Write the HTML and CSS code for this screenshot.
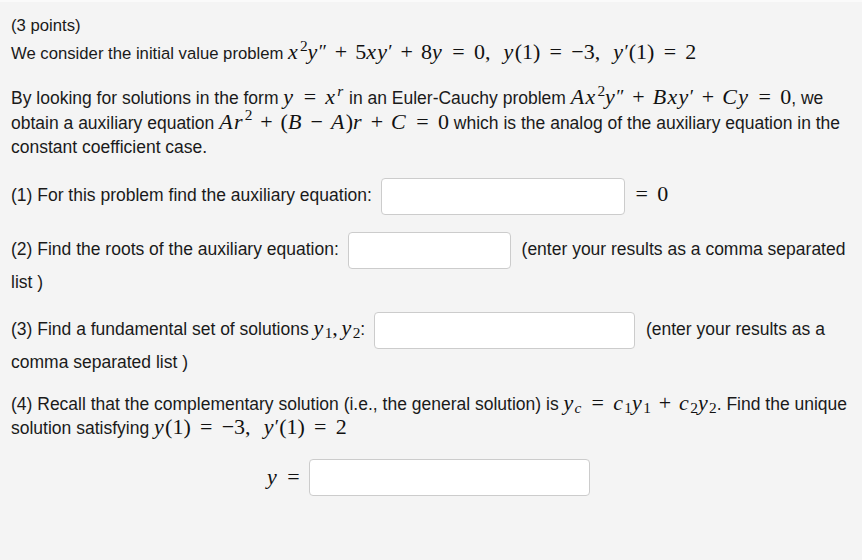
FILE: index.html
```html
<!DOCTYPE html>
<html>
<head>
<meta charset="utf-8">
<link rel="stylesheet" href="styles.css">
</head>
<body>
<div class="page">
  <p class="para intro">(3 points)<br>We consider the initial value problem <span class="m"><i>x</i><sup>2</sup><i>y</i><span class="pr">″</span><span class="op">+</span>5<i>x</i><i>y</i><span class="pr">′</span><span class="op">+</span>8<i>y</i><span class="rel">=</span>0,<span class="sp"></span><i>y</i>(1)<span class="rel">=</span>−3,<span class="sp"></span><i>y</i><span class="pr">′</span>(1)<span class="rel">=</span>2</span></p>

  <p class="para">By looking for solutions in the form <span class="m"><i>y</i><span class="rel">=</span><i>x</i><sup><i>r</i></sup></span> in an Euler-Cauchy problem <span class="m"><i>A</i><i>x</i><sup>2</sup><i>y</i><span class="pr">″</span><span class="op">+</span><i>B</i><i>x</i><i>y</i><span class="pr">′</span><span class="op">+</span><i>C</i><i>y</i><span class="rel">=</span>0</span>, we obtain a auxiliary equation <span class="m"><i>A</i><i>r</i><sup>2</sup><span class="op">+</span>(<i>B</i><span class="op">−</span><i>A</i>)<i>r</i><span class="op">+</span><i>C</i><span class="rel">=</span>0</span> which is the analog of the auxiliary equation in the constant coefficient case.</p>

  <p class="para q">(1) For this problem find the auxiliary equation: <input class="box box1" type="text"> <span class="m"><span class="rel lead">=</span>0</span></p>

  <p class="para q">(2) Find the roots of the auxiliary equation: <input class="box box2" type="text"> (enter your results as a comma separated list )</p>

  <p class="para q">(3) Find a fundamental set of solutions <span class="m"><i>y</i><sub>1</sub>,<span class="thin"></span><i>y</i><sub>2</sub></span>: <input class="box box3" type="text"> (enter your results as a comma separated list )</p>

  <p class="para last">(4) Recall that the complementary solution (i.e., the general solution) is <span class="m"><i>y</i><sub><i>c</i></sub><span class="rel">=</span><i>c</i><sub>1</sub><i>y</i><sub>1</sub><span class="op">+</span><i>c</i><sub>2</sub><i>y</i><sub>2</sub></span>. Find the unique solution satisfying <span class="m"><i>y</i>(1)<span class="rel">=</span>−3,<span class="sp"></span><i>y</i><span class="pr">′</span>(1)<span class="rel">=</span>2</span></p>

  <div class="answer"><span class="m"><i>y</i><span class="rel">=</span></span><input class="box box4" type="text"></div>
</div>
</body>
</html>
```

FILE: styles.css
```css
html, body {
  margin: 0;
  padding: 0;
  background: #f4f4f4;
}
body {
  border-top: 2px solid #fafafa;
  font-family: "Liberation Sans", Arial, sans-serif;
  font-size: 17.5px;
  color: #1a1a1a;
}
.page {
  width: 840px;
  padding: 10px 0 0 11px;
}
.para {
  margin: 0 0 18px 0;
  line-height: 24.5px;
}
.intro {
  font-size: 16.7px;
  line-height: 28px;
  margin-bottom: 18px;
}
.m {
  font-family: "Liberation Serif", "Times New Roman", serif;
  font-size: 22px;
  line-height: 1;
  color: #111;
  white-space: nowrap;
}
.m i {
  font-style: italic;
  letter-spacing: 0.06em;
}
.m sup {
  font-size: 0.7em;
  line-height: 0;
  vertical-align: 0.55em;
  margin-left: 0.05em;
}
.m sub {
  font-size: 0.7em;
  line-height: 0;
  vertical-align: -0.2em;
}
.pr {
  font-style: normal;
  font-size: 0.9em;
  vertical-align: 0.05em;
}
.op {
  padding: 0 0.36em;
}
.rel {
  padding: 0 0.42em;
}
.rel.lead {
  padding-left: 0;
}
.sp {
  display: inline-block;
  width: 0.6em;
}
.thin {
  display: inline-block;
  width: 0.17em;
}
.box {
  display: inline-block;
  box-sizing: border-box;
  height: 37px;
  vertical-align: middle;
  margin: 0 4px 0 4px;
  background: #ffffff;
  border: 1px solid #cccccc;
  border-radius: 4px;
  padding: 0 8px;
  font-size: 16px;
}
.box1 { width: 244px; margin-right: 6px; }
.box2 { width: 163px; margin-right: 6px; }
.box3 { width: 261px; margin-right: 6px; }
.box4 { width: 281px; margin-left: 0; }
.q {
  line-height: 26px;
  margin-bottom: 17px;
}
.last {
  margin-bottom: 18px;
}
.answer {
  display: flex;
  align-items: center;
  padding-left: 256px;
}
```
